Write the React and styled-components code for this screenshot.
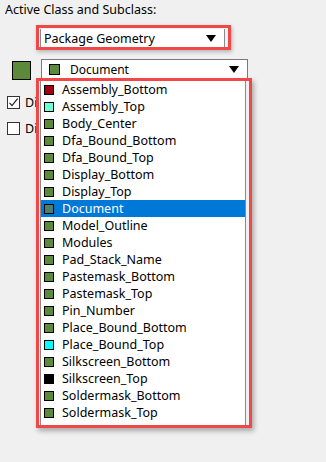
import React from "react";
import styled, { createGlobalStyle } from "styled-components";

const subclasses = [
  { name: "Assembly_Bottom", color: "#a0000f" },
  { name: "Assembly_Top", color: "#6fffd6" },
  { name: "Body_Center", color: "#5b8a3a" },
  { name: "Dfa_Bound_Bottom", color: "#5b8a3a" },
  { name: "Dfa_Bound_Top", color: "#5b8a3a" },
  { name: "Display_Bottom", color: "#5b8a3a" },
  { name: "Display_Top", color: "#5b8a3a" },
  { name: "Document", color: "#4a8070", selected: true },
  { name: "Model_Outline", color: "#5b8a3a" },
  { name: "Modules", color: "#5b8a3a" },
  { name: "Pad_Stack_Name", color: "#5b8a3a" },
  { name: "Pastemask_Bottom", color: "#5b8a3a" },
  { name: "Pastemask_Top", color: "#5b8a3a" },
  { name: "Pin_Number", color: "#5b8a3a" },
  { name: "Place_Bound_Bottom", color: "#5b8a3a" },
  { name: "Place_Bound_Top", color: "#00ffff" },
  { name: "Silkscreen_Bottom", color: "#5b8a3a" },
  { name: "Silkscreen_Top", color: "#000000" },
  { name: "Soldermask_Bottom", color: "#5b8a3a" },
  { name: "Soldermask_Top", color: "#5b8a3a" },
];

const App = () => {
  return (
    <>
      <GlobalStyle />
      <Panel>
        <Heading>Active Class and Subclass:</Heading>
        <Highlight>
          <ClassSelect>
            <span>Package Geometry</span>
            <Arrow />
          </ClassSelect>
        </Highlight>
        <SubclassRow>
          <BigSwatch />
          <Combo>
            <Swatch color="#5b8a3a" size={11} />
            <ComboText>Document</ComboText>
            <Arrow />
          </Combo>
          <ListHighlight>
            <List>
              {subclasses.map((item) => (
                <Row key={item.name} selected={item.selected}>
                  <Swatch color={item.color} size={10} />
                  <RowText>{item.name}</RowText>
                </Row>
              ))}
            </List>
          </ListHighlight>
        </SubclassRow>
        <Checks>
          <CheckRow>
            <Check>
              <svg width="11" height="11" viewBox="0 0 11 11">
                <path d="M1.5 5.8 L4 8.6 L9.6 1.6" fill="none" stroke="#222" strokeWidth="1.2" />
              </svg>
            </Check>
            <CheckLabel>Display</CheckLabel>
          </CheckRow>
          <CheckRow>
            <Check />
            <CheckLabel>Display</CheckLabel>
          </CheckRow>
        </Checks>
      </Panel>
    </>
  );
};

export default App;

const GlobalStyle = createGlobalStyle`
  html, body {
    margin: 0;
    background: #f0f0f0;
  }
  body {
    font-family: "Noto Sans", "Open Sans", sans-serif;
    font-size: 12.5px;
    color: #000;
  }
`;

const Panel = styled.div`
  width: 326px;
  height: 462px;
  background: #f0f0f0;
  padding: 2px 0 0 5px;
  box-sizing: border-box;
  position: relative;
  overflow: hidden;
`;

const Heading = styled.div`
  font-size: 12.5px;
  line-height: 16px;
  color: #000;
`;

const Highlight = styled.div`
  margin: 7px 0 0 31px;
  width: 195px;
  height: 25px;
  box-sizing: border-box;
  border: 3px solid #f04848;
  padding: 1px 3px 0 1px;
  box-shadow: 1px 2px 4px rgba(0, 0, 0, 0.25);
  display: flex;
`;

const ClassSelect = styled.div`
  flex: 1;
  background: #fff;
  border-left: 1px solid #8a8a8a;
  border-right: 1px solid #8a8a8a;
  height: 18px;
  display: flex;
  align-items: center;
  justify-content: space-between;
  padding: 0 8px 0 3px;
  font-size: 12.5px;
`;

const Arrow = styled.div`
  width: 0;
  height: 0;
  border-left: 5px solid transparent;
  border-right: 5px solid transparent;
  border-top: 7px solid #000;
`;

const SubclassRow = styled.div`
  position: relative;
  display: flex;
  align-items: flex-start;
  gap: 10px;
  margin: 9px 0 0 7px;
  z-index: 1;
`;

const BigSwatch = styled.div`
  width: 17px;
  height: 17px;
  margin-top: 2px;
  background: #5b8a3a;
  border: 1px solid #000;
`;

const Combo = styled.div`
  width: 207px;
  height: 20px;
  box-sizing: border-box;
  background: #fff;
  border: 1px solid #7a7a7a;
  display: flex;
  align-items: center;
  padding: 0 8px 0 7px;
`;

const ComboText = styled.span`
  flex: 1;
  margin-left: 10px;
  font-size: 12px;
`;

const Swatch = styled.span`
  width: ${(p) => p.size}px;
  height: ${(p) => p.size}px;
  flex: none;
  box-sizing: border-box;
  background: ${(p) => p.color};
  border: 1px solid #000;
`;

const ListHighlight = styled.div`
  position: absolute;
  left: 24px;
  top: 19px;
  width: 216px;
  height: 350px;
  box-sizing: border-box;
  border: 3px solid #f04848;
  padding: 0 3px 0 1px;
  box-shadow: 2px 3px 5px rgba(0, 0, 0, 0.3);
  background: #f0f0f0;
  display: flex;
`;

const List = styled.div`
  flex: 1;
  background: #fff;
  border-left: 1px solid #8a8a8a;
  border-right: 1px solid #8a8a8a;
  overflow: hidden;
`;

const Row = styled.div`
  height: 17px;
  display: flex;
  align-items: center;
  gap: 8px;
  padding-left: 3px;
  background: ${(p) => (p.selected ? "#0078d7" : "transparent")};
  color: ${(p) => (p.selected ? "#fff" : "#000")};
`;

const RowText = styled.span`
  font-size: 12.5px;
  line-height: 17px;
  white-space: nowrap;
`;

const Checks = styled.div`
  display: flex;
  flex-direction: column;
  gap: 11px;
  margin: 15px 0 0 2px;
`;

const CheckRow = styled.div`
  display: flex;
  align-items: center;
  gap: 5px;
`;

const Check = styled.div`
  width: 13px;
  height: 13px;
  box-sizing: border-box;
  border: 1px solid #333;
  background: #fff;
  display: flex;
  align-items: center;
  justify-content: center;
`;

const CheckLabel = styled.span`
  width: 11px;
  overflow: hidden;
  white-space: nowrap;
  font-size: 12.5px;
  line-height: 15px;
`;
